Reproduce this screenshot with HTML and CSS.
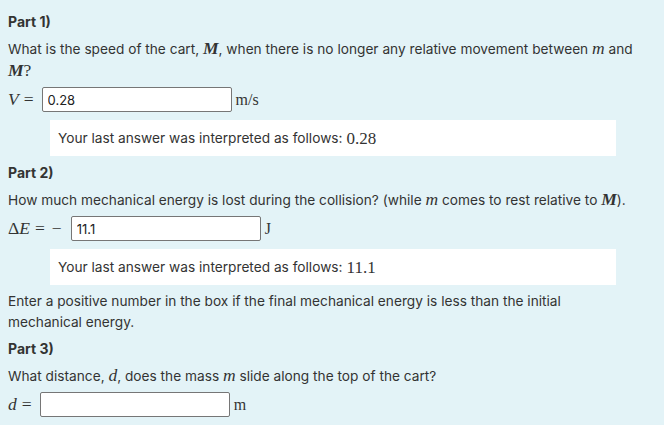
FILE: index.html
```html
<!DOCTYPE html>
<html>
<head>
<meta charset="utf-8">
<link rel="stylesheet" href="styles.css">
</head>
<body>
<div class="page">
  <div class="part-title">Part 1)</div>
  <p class="text">What is the speed of the cart, <span class="mi b">M</span>, when there is no longer any relative movement between <span class="mi">m</span> and <span class="mi b">M</span><span class="mo">?</span></p>
  <div class="answer-row">
    <span class="math"><span class="mi">V</span><span class="eq">=</span></span>
    <input class="ans" type="text" value="0.28">
    <span class="unit">m/s</span>
  </div>
  <div class="feedback">Your last answer was interpreted as follows: <span class="fb-val">0.28</span></div>

  <div class="part-title">Part 2)</div>
  <p class="text">How much mechanical energy is lost during the collision? (while <span class="mi">m</span> comes to rest relative to <span class="mi b">M</span>).</p>
  <div class="answer-row">
    <span class="math"><span class="mo">Δ</span><span class="mi">E</span><span class="eq">=</span><span class="minus">−</span></span>
    <input class="ans" type="text" value="11.1">
    <span class="unit">J</span>
  </div>
  <div class="feedback">Your last answer was interpreted as follows: <span class="fb-val">11.1</span></div>
  <p class="text">Enter a positive number in the box if the final mechanical energy is less than the initial mechanical energy.</p>

  <div class="part-title">Part 3)</div>
  <p class="text">What distance, <span class="mi">d</span>, does the mass <span class="mi">m</span> slide along the top of the cart?</p>
  <div class="answer-row">
    <span class="math"><span class="mi">d</span><span class="eq">=</span></span>
    <input class="ans" type="text" value="">
    <span class="unit">m</span>
  </div>
</div>
</body>
</html>
```

FILE: styles.css
```css
html, body {
  margin: 0;
  padding: 0;
  background: #e3f3f7;
}
.page {
  padding: 11px 30px 0 8px;
  font-family: Inter, "Noto Sans", sans-serif;
  font-size: 13.7px;
  line-height: 21px;
  color: #333;
}
.part-title {
  font-weight: 700;
  font-size: 14px;
  margin: 0 0 6px 0;
}
.text {
  margin: 0 0 5px 0;
}
.mi {
  font-family: "Liberation Serif", "Times New Roman", serif;
  font-style: italic;
  font-size: 17.5px;
}
.mi.b {
  font-weight: 700;
}
.mo {
  font-family: "Liberation Serif", serif;
  font-size: 17.5px;
}
.answer-row {
  display: flex;
  align-items: center;
  height: 25px;
  margin: 0 0 8px 0;
}
.math {
  font-family: "Liberation Serif", serif;
  font-size: 17.5px;
  display: flex;
  align-items: center;
}
.eq {
  margin: 0 5px 0 5px;
}
.minus {
  margin: 0 6px 0 2px;
}
.ans {
  width: 190px;
  height: 25px;
  box-sizing: border-box;
  border: 1px solid #767676;
  border-radius: 2px;
  background: #fff;
  padding: 0 5px;
  font-family: Inter, sans-serif;
  font-size: 13px;
  color: #222;
  margin: 0 0 0 3px;
}
.unit {
  font-family: "Liberation Serif", serif;
  font-size: 16px;
  margin-left: 4px;
}
.feedback {
  background: #fff;
  margin: 0 48px 6px 42px;
  width: 566px;
  height: 36px;
  display: flex;
  align-items: center;
  padding: 0 8px;
  box-sizing: border-box;
}
.fb-val {
  font-family: "Liberation Serif", serif;
  font-size: 17px;
  margin-left: 4px;
}
```
